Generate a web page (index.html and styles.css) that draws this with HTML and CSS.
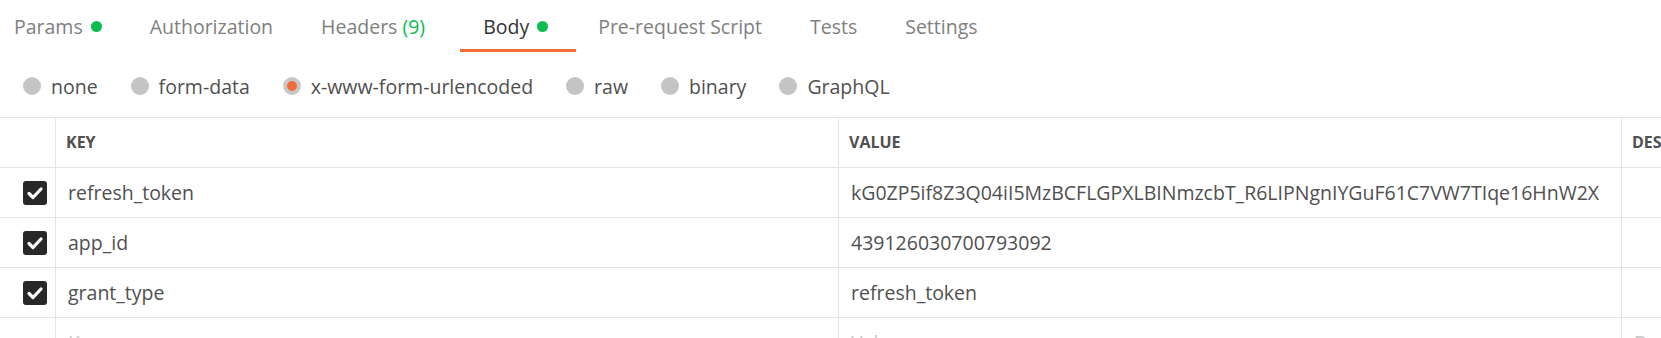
FILE: index.html
```html
<!DOCTYPE html>
<html lang="en">
<head>
<meta charset="utf-8">
<title>Body</title>
<link rel="stylesheet" href="styles.css">
</head>
<body>
<div class="page">
  <nav class="tabs">
    <div class="tab tab-first">Params<span class="dot"></span></div>
    <div class="tab">Authorization</div>
    <div class="tab">Headers <span class="count">(9)</span></div>
    <div class="tab tab-active">Body<span class="dot"></span></div>
    <div class="tab tab-after">Pre-request Script</div>
    <div class="tab">Tests</div>
    <div class="tab">Settings</div>
  </nav>

  <div class="modes">
    <label class="mode"><span class="radio"></span>none</label>
    <label class="mode"><span class="radio"></span>form-data</label>
    <label class="mode"><span class="radio radio-on"></span>x-www-form-urlencoded</label>
    <label class="mode"><span class="radio"></span>raw</label>
    <label class="mode"><span class="radio"></span>binary</label>
    <label class="mode"><span class="radio"></span>GraphQL</label>
  </div>

  <div class="table">
    <div class="cell cell-check head"></div>
    <div class="cell head">KEY</div>
    <div class="cell head">VALUE</div>
    <div class="cell head">DESCRIPTION</div>

    <div class="cell cell-check"><span class="checkbox"><svg viewBox="0 0 24 24" width="24" height="24"><polyline points="6,12.5 10,16.5 18,8" fill="none" stroke="#fff" stroke-width="3.2" stroke-linecap="round" stroke-linejoin="round"/></svg></span></div>
    <div class="cell">refresh_token</div>
    <div class="cell">kG0ZP5if8Z3Q04iI5MzBCFLGPXLBINmzcbT_R6LIPNgnIYGuF61C7VW7TIqe16HnW2X</div>
    <div class="cell"></div>

    <div class="cell cell-check"><span class="checkbox"><svg viewBox="0 0 24 24" width="24" height="24"><polyline points="6,12.5 10,16.5 18,8" fill="none" stroke="#fff" stroke-width="3.2" stroke-linecap="round" stroke-linejoin="round"/></svg></span></div>
    <div class="cell">app_id</div>
    <div class="cell">439126030700793092</div>
    <div class="cell"></div>

    <div class="cell cell-check"><span class="checkbox"><svg viewBox="0 0 24 24" width="24" height="24"><polyline points="6,12.5 10,16.5 18,8" fill="none" stroke="#fff" stroke-width="3.2" stroke-linecap="round" stroke-linejoin="round"/></svg></span></div>
    <div class="cell">grant_type</div>
    <div class="cell">refresh_token</div>
    <div class="cell"></div>

    <div class="cell cell-check"></div>
    <div class="cell placeholder">Key</div>
    <div class="cell placeholder">Value</div>
    <div class="cell placeholder">Description</div>
  </div>
</div>
</body>
</html>
```

FILE: styles.css
```css
html, body {
  margin: 0;
  padding: 0;
  background: #ffffff;
  overflow: hidden;
}

.page {
  width: 2500px;
  font-family: "Open Sans", "Noto Sans", sans-serif;
  font-size: 19.5px;
  color: #505050;
}

.tabs {
  display: flex;
  height: 52px;
}

.tab {
  display: flex;
  align-items: center;
  box-sizing: border-box;
  height: 52px;
  padding: 4px 24px 0 24px;
  border-bottom: 3px solid transparent;
  color: #808080;
  white-space: pre;
}

.tab-first {
  padding-left: 14px;
}

.tab-active {
  color: #333333;
  border-bottom-color: #f26b3a;
  margin-left: 11px;
  padding-left: 23px;
  padding-right: 28px;
}

.tab-after {
  padding-left: 22px;
}

.dot {
  display: inline-block;
  width: 11px;
  height: 11px;
  margin-left: 8px;
  border-radius: 50%;
  background: #0cbb52;
}

.count {
  color: #0cbb52;
}

.modes {
  display: flex;
  align-items: center;
  height: 65px;
  padding-left: 23px;
  padding-top: 3px;
  box-sizing: border-box;
  gap: 33px;
}

.mode {
  display: flex;
  align-items: center;
  gap: 10px;
  color: #505050;
}

.radio {
  width: 18px;
  height: 18px;
  border-radius: 50%;
  background: #c4c4c4;
  box-sizing: border-box;
}

.radio-on {
  background: #f26b3a;
  border: 4px solid #c8c8c8;
}

.table {
  display: grid;
  grid-template-columns: 55px 783px 783px 783px;
  grid-auto-rows: 50px;
  border-top: 1px solid #e4e4e4;
}

.cell {
  display: flex;
  align-items: center;
  box-sizing: border-box;
  padding-left: 12px;
  border-bottom: 1px solid #e4e4e4;
  border-left: 1px solid #e4e4e4;
  white-space: nowrap;
  overflow: hidden;
}

.cell-check {
  border-left: none;
  padding-left: 23px;
}

.head {
  font-size: 16px;
  font-weight: 700;
  color: #505050;
  padding-left: 10px;
  padding-bottom: 2px;
}

.cell-check.head {
  padding-left: 0;
}

.placeholder {
  color: #c8c8c8;
}

.checkbox {
  display: block;
  width: 24px;
  height: 24px;
  border-radius: 3px;
  background: #282828;
}

.checkbox svg {
  display: block;
}
```
